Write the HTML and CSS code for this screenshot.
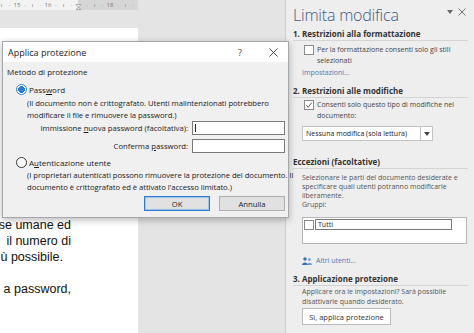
FILE: index.html
```html
<!DOCTYPE html>
<html lang="it">
<head>
    <meta charset="UTF-8">
    <meta name="viewport" content="width=device-width, initial-scale=1.0">
    <title>Limita modifica</title>
    <link rel="stylesheet" href="styles.css">
</head>
<body>
    <div class="workspace">
        <div class="ruler">
            <span class="first">ı</span><span>·</span><span>15</span><span>·</span><span>ı</span><span>·</span><span>16</span><span>·</span><span>ı</span><span>·</span>
            <span class="marker"><svg width="7" height="10" viewBox="0 0 7 10"><path d="M1 4.5 L6 4.5 L3.5 7.5 Z M3.5 7.5 L6 9.5 L1 9.5 Z" fill="#fff" stroke="#999" stroke-width="0.8"/></svg></span>
            <span>·</span><span>ı</span><span>·</span><span>18</span><span>·</span><span>ı</span><span>·</span>
        </div>
        <div class="page">
            <div class="page-text">
                <div class="page-line">se umane ed</div>
                <div class="page-line">il numero di</div>
                <div class="page-line short">ù possibile.</div>
                <div class="page-line"></div>
                <div class="page-line">a password,</div>
            </div>
        </div>

        <div class="dialog">
            <div class="dlg-title">
                <span class="dlg-caption">Applica protezione</span>
                <span class="dlg-help">?</span>
                <span class="dlg-close"><svg width="9" height="9" viewBox="0 0 9 9"><path d="M0.5 0.5 L8.5 8.5 M8.5 0.5 L0.5 8.5" stroke="#333" stroke-width="0.9"/></svg></span>
            </div>
            <div class="dlg-body">
                <div class="dlg-group">Metodo di protezione</div>
                <div class="radio-row"><span class="radio on"></span>Pass<u>w</u>ord</div>
                <p class="dlg-note">(Il documento non è crittografato. Utenti malintenzionati potrebbero<br>modificare il file e rimuovere la password.)</p>
                <div class="field"><label>Immissione <u>n</u>uova password (facoltativa):</label><span class="input caret"></span></div>
                <div class="field second"><label>Conferma <u>p</u>assword:</label><span class="input"></span></div>
                <div class="radio-row two"><span class="radio"></span>A<u>u</u>tenticazione utente</div>
                <p class="dlg-note loose">(I proprietari autenticati possono rimuovere la protezione del documento. Il<br>documento è crittografato ed è attivato l'accesso limitato.)</p>
                <div class="dlg-buttons">
                    <button class="btn default">OK</button>
                    <button class="btn">Annulla</button>
                </div>
            </div>
        </div>
    </div>

    <aside class="pane">
        <div class="pane-head">
            <h1>Limita modifica</h1>
            <span class="pane-tools">
                <svg width="6" height="4" viewBox="0 0 6 4"><path d="M0 0 L6 0 L3 4 Z" fill="#666"/></svg>
                <svg width="8" height="8" viewBox="0 0 8 8"><path d="M0.5 0.5 L7.5 7.5 M7.5 0.5 L0.5 7.5" stroke="#666" stroke-width="0.9"/></svg>
            </span>
        </div>

        <h2>1. Restrizioni alla formattazione</h2>
        <div class="check-row first"><span class="check"></span><span>Per la formattazione consenti solo gli stili<br>selezionati</span></div>
        <a class="link settings">Impostazioni...</a>

        <h2>2. Restrizioni alle modifiche</h2>
        <div class="check-row"><span class="check on"><svg width="8" height="8" viewBox="0 0 8 8"><path d="M1.3 4.3 L3.2 6.2 L6.8 1.6" fill="none" stroke="#444" stroke-width="0.9"/></svg></span><span>Consenti solo questo tipo di modifiche nel<br>documento:</span></div>
        <div class="select"><span class="select-value">Nessuna modifica (sola lettura)</span><span class="select-arrow"><svg width="6" height="4" viewBox="0 0 6 4"><path d="M0 0 L6 0 L3 4 Z" fill="#444"/></svg></span></div>

        <h2 class="gap">Eccezioni (facoltative)</h2>
        <p class="pane-text">Selezionare le parti del documento desiderate e<br>specificare quali utenti potranno modificarle<br>liberamente.</p>
        <div class="pane-label">Gruppi:</div>
        <div class="group-list">
            <div class="group-item"><span class="check"></span><span class="group-name">Tutti</span></div>
        </div>
        <a class="link users">
            <svg width="10" height="8" viewBox="0 0 10 8"><circle cx="3" cy="2" r="1.7" fill="#3a6fb0"/><path d="M0 8 C0 4.6 6 4.6 6 8 Z" fill="#3a6fb0"/><circle cx="7.4" cy="2.6" r="1.4" fill="#6c9bd2"/><path d="M5.6 8 C5.4 5.2 10 5 10 8 Z" fill="#6c9bd2"/></svg>
            Altri utenti...
        </a>

        <h2>3. Applicazione protezione</h2>
        <p class="pane-text last">Applicare ora le impostazioni? Sarà possibile<br>disattivarle quando desiderato.</p>
        <button class="apply">Sì, applica protezione</button>
    </aside>
</body>
</html>
```

FILE: styles.css
```css
body { margin: 0; width: 474px; height: 333px; overflow: hidden; display: flex; background: #e4e4e4; font-family: "Open Sans", "Noto Sans", sans-serif; color: #333; }

/* document side */
.workspace { position: relative; width: 285px; flex: none; }
.ruler { width: 138px; height: 10px; display: flex; overflow: hidden; background: linear-gradient(to right, #f3f3f3 78px, #d6d6d6 78px); font-size: 6px; line-height: 10px; color: #777; }
.ruler span { flex: none; width: 7.75px; text-align: center; }
.ruler .first { margin-left: -2.4px; }
.ruler .marker svg { display: block; margin: 0 auto; }
.page { margin-top: 18px; width: 138px; height: 305px; background: #fff; }
.page-text { padding-top: 189px; width: 71px; font: 12.5px/16px "Liberation Sans", Arial, sans-serif; color: #111; }
.page-line { display: flex; justify-content: flex-end; white-space: nowrap; height: 16px; }
.page-line.short { padding-right: 8px; }

/* dialog */
.dialog { position: absolute; left: 2px; top: 41px; width: 287px; height: 177px; box-sizing: border-box; border: 1px solid #a4a7ab; background: #f0f0f0; box-shadow: 0 2px 7px rgba(0,0,0,0.28); display: flex; flex-direction: column; font-size: 7.7px; color: #1a1a1a; }
.dlg-title { height: 20px; background: #fff; display: flex; align-items: center; padding-left: 5px; font-size: 9px; }
.dlg-caption { flex: 1; }
.dlg-help { width: 10px; text-align: center; margin-right: 24px; color: #444; }
.dlg-close { width: 9px; margin-right: 10px; display: flex; }
.dlg-body { padding: 4px 3px 0 4px; white-space: nowrap; }
.dlg-group { line-height: 12px; font-size: 8px; }
.radio-row { display: flex; align-items: center; height: 12px; margin-top: 5px; padding-left: 9px; font-size: 8px; }
.radio-row.two { margin-top: 3px; }
.radio { width: 9px; height: 9px; border: 1px solid #333; border-radius: 50%; background: #fff; margin-right: 2px; box-sizing: content-box; }
.radio.on { border-color: #2a7fd4; background: radial-gradient(circle, #2a7fd4 0 3.2px, #fff 3.6px); }
.dlg-note { margin: 2px 0 0 20px; line-height: 12px; letter-spacing: -0.05px; }
.dlg-note.loose { margin-top: 1px; }
.field { display: flex; justify-content: flex-end; align-items: center; gap: 4px; }
.field.second { margin-top: 4px; }
.input { width: 91px; height: 12px; border: 1px solid #7a7a7a; background: #fff; }
.input.caret { background: linear-gradient(#222, #222) 2px 2px / 1px 8px no-repeat, #fff; }
.dlg-buttons { display: flex; justify-content: flex-end; gap: 9px; margin-top: 3px; }
.btn { width: 66px; height: 15px; border: 1px solid #adadad; background: #e1e1e1; font: inherit; font-size: 7.7px; color: #222; padding: 0; }
.btn.default { border: 1px solid #2f7bd4; box-shadow: inset 0 0 0 1px #9cc3ee; }

/* task pane */
.pane { flex: 1; border-left: 1px solid #cdcdcd; background: #eeeeee; padding: 0 6px 0 7px; font-size: 7px; color: #444; white-space: nowrap; }
.pane-head { display: flex; align-items: center; height: 29px; }
.pane-head h1 { flex: 1; margin: 0; font-size: 16px; font-weight: 300; color: #3d5a80; letter-spacing: -0.2px; }
.pane-tools { display: flex; align-items: center; gap: 5px; margin-top: -6px; margin-right: 2px; }
h2 { margin: 0; font-size: 8px; font-weight: 700; color: #333; line-height: 10px; padding-bottom: 1px; border-bottom: 1px solid #d4d4d4; }
.check-row { display: flex; align-items: flex-start; margin: 0.5px 0 0 11px; line-height: 11px; }
.check-row.first { margin-top: 2.5px; }
.check { flex: none; width: 8px; height: 8px; border: 1px solid #8a8a8a; background: #fff; margin: 1px 3px 0 0; display: flex; }
.link { display: flex; align-items: center; gap: 4px; color: #4a7bb7; line-height: 10px; margin-left: 9px; }
.link.settings { margin-top: 2.5px; margin-bottom: 8px; }
.select { display: flex; margin: 5.5px 0 0 9px; width: 131px; height: 15px; box-sizing: border-box; border: 1px solid #c3c3c3; background: #fff; color: #222; }
.select-value { flex: 1; padding-left: 3px; line-height: 13px; }
.select-arrow { width: 11px; border-left: 1px solid #c3c3c3; display: flex; align-items: center; justify-content: center; }
h2.gap { margin-top: 16px; }
.pane-text { margin: 3.5px 0 0 9px; line-height: 9px; color: #555; }
.pane-text.last { margin-top: 1px; line-height: 10px; }
.pane-label { margin-left: 9px; line-height: 9px; color: #555; }
.group-list { margin: 8.5px 0 0 9px; width: 165px; height: 27px; box-sizing: border-box; border: 1px solid #b5b5b5; background: #fff; }
.group-item { display: flex; align-items: center; margin: 1px 0 0 1px; }
.group-item .check { margin: 0; }
.group-name { flex: 1; margin-left: 1px; margin-right: 14px; height: 9px; border: 1px solid #777; line-height: 9px; padding-left: 2px; color: #222; font-size: 7px; }
.link.users { margin-top: 12px; margin-bottom: 8px; }
.apply { margin: 1px 0 0 9px; width: 89px; height: 17px; border: 1px solid #b9b9b9; background: #fff; font: inherit; font-size: 7.5px; color: #333; padding: 0; }
```
